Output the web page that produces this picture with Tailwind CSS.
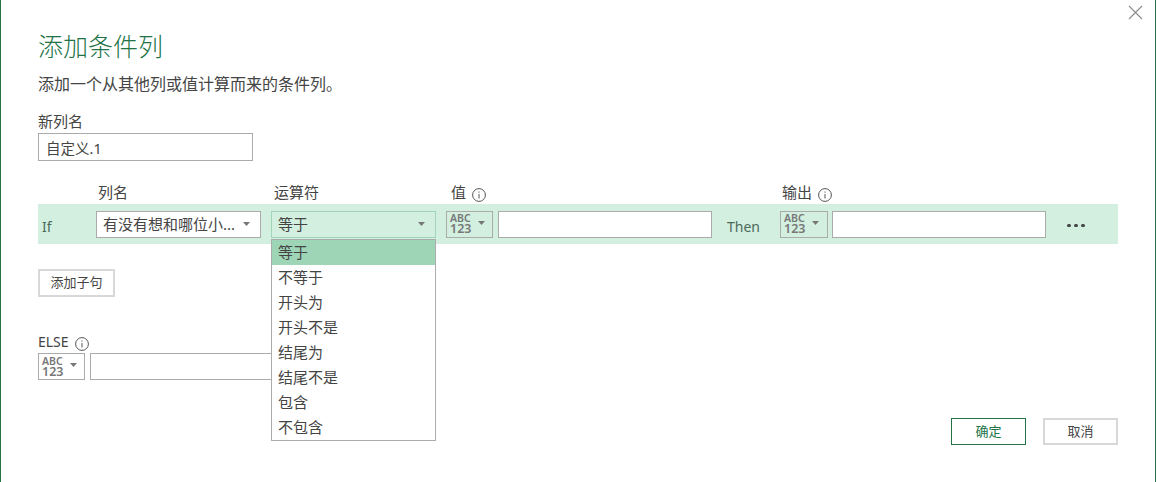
<!DOCTYPE html>
<html lang="zh-CN">
<head>
<meta charset="UTF-8">
<meta name="viewport" content="width=device-width, initial-scale=1.0">
<title>添加条件列</title>
<script src="https://cdn.jsdelivr.net/npm/@tailwindcss/browser@4"></script>
</head>
<body class="bg-white">
<div class="relative h-[482px] w-[1156px] overflow-hidden border-x border-[#217346] bg-white pl-[37px] font-['Noto_Sans','Noto_Sans_CJK_SC',sans-serif] text-[#444444]">
  <!-- close -->
  <button class="absolute right-[12px] top-[5px] h-[15px] w-[15px]">
    <svg viewBox="0 0 15 15" class="h-[15px] w-[15px]" fill="none" stroke="#8a8a8a" stroke-width="1.1"><path d="M1 1L14 14M14 1L1 14"/></svg>
  </button>

  <h1 class="pt-[29px] text-[25px] leading-[34px] font-light text-[#217346]">添加条件列</h1>
  <p class="mt-[9px] text-[16px] leading-[24px]">添加一个从其他列或值计算而来的条件列。</p>

  <label class="mt-[15px] block text-[15px] leading-[20px]">新列名</label>
  <input class="mt-[2px] block h-[28px] w-[215px] border border-[#ababab] pl-[7px] text-[14.5px] leading-[20px] text-[#444444] outline-none" value="自定义.1">

  <!-- headers -->
  <div class="mt-[20px] flex h-[22px] text-[15px] leading-[22px]">
    <span class="ml-[60px] w-[176px]">列名</span>
    <span class="w-[177px]">运算符</span>
    <span class="flex w-[331px] items-center">值
      <svg viewBox="0 0 14 14" class="ml-[6px] mt-[5px] h-[14px] w-[14px]" fill="none" stroke="#555555"><circle cx="7" cy="7" r="6.4"/><path d="M7 6v4.5M7 3.5v1.2"/></svg>
    </span>
    <span class="flex items-center">输出
      <svg viewBox="0 0 14 14" class="ml-[6px] mt-[5px] h-[14px] w-[14px]" fill="none" stroke="#555555"><circle cx="7" cy="7" r="6.4"/><path d="M7 6v4.5M7 3.5v1.2"/></svg>
    </span>
  </div>

  <!-- condition row -->
  <div class="relative mt-[1px] flex h-[40px] w-[1080px] items-center bg-[#d3efe0] text-[15px]">
    <span class="mt-[4px] w-[58px] pl-[4px] text-[14px] text-[#4b6a5a]">If</span>
    <div class="flex h-[27px] w-[165px] items-center justify-between border border-[#ababab] bg-white pl-[6px] pr-[10px]">
      <span>有没有想和哪位小...</span>
      <svg viewBox="0 0 7 4" class="h-[4px] w-[7px]" fill="#777777"><path d="M0 0h7L3.5 4z"/></svg>
    </div>
    <div class="ml-[10px] flex h-[27px] w-[165px] items-center justify-between border border-[#a0d5b8] pl-[6px] pr-[10px]">
      <span>等于</span>
      <svg viewBox="0 0 7 4" class="h-[4px] w-[7px]" fill="#777777"><path d="M0 0h7L3.5 4z"/></svg>
    </div>
    <div class="ml-[10px] flex h-[27px] w-[47px] items-center border border-[#ababab] pl-[3px]">
      <div class="flex w-[23px] flex-col font-semibold text-[#777777]">
        <span class="text-[10.5px] leading-[9px]">ABC</span>
        <span class="text-[12.5px] leading-[11px]">123</span>
      </div>
      <svg viewBox="0 0 7 4" class="ml-[5px] mb-[3px] h-[4px] w-[7px]" fill="#777777"><path d="M0 0h7L3.5 4z"/></svg>
    </div>
    <div class="ml-[5px] h-[27px] w-[214px] border border-[#ababab] bg-white"></div>
    <span class="mt-[4px] w-[68px] pl-[15px] text-[14px] text-[#4b6a5a]">Then</span>
    <div class="flex h-[27px] w-[48px] items-center border border-[#ababab] pl-[3px]">
      <div class="flex w-[23px] flex-col font-semibold text-[#777777]">
        <span class="text-[10.5px] leading-[9px]">ABC</span>
        <span class="text-[12.5px] leading-[11px]">123</span>
      </div>
      <svg viewBox="0 0 7 4" class="ml-[5px] mb-[3px] h-[4px] w-[7px]" fill="#777777"><path d="M0 0h7L3.5 4z"/></svg>
    </div>
    <div class="ml-[4px] h-[27px] w-[214px] border border-[#ababab] bg-white"></div>
    <div class="ml-[21px] mt-[2px] flex gap-[3px]">
      <span class="h-[3px] w-[4px] rounded-full bg-[#444444]"></span>
      <span class="h-[3px] w-[4px] rounded-full bg-[#444444]"></span>
      <span class="h-[3px] w-[4px] rounded-full bg-[#444444]"></span>
    </div>

    <!-- operator dropdown -->
    <ul class="absolute left-[233px] top-[35px] z-10 w-[165px] border border-[#ababab] bg-white text-[15px] leading-[24px]">
      <li class="h-[25px] bg-[#9fd5b7] pl-[6px]">等于</li>
      <li class="h-[25px] pl-[6px]">不等于</li>
      <li class="h-[25px] pl-[6px]">开头为</li>
      <li class="h-[25px] pl-[6px]">开头不是</li>
      <li class="h-[25px] pl-[6px]">结尾为</li>
      <li class="h-[25px] pl-[6px]">结尾不是</li>
      <li class="h-[25px] pl-[6px]">包含</li>
      <li class="h-[25px] pl-[6px]">不包含</li>
    </ul>
  </div>

  <button class="mt-[25px] block h-[28px] w-[77px] border-2 border-[#d8d8d8] text-[13px]">添加子句</button>

  <div class="mt-[34px] flex h-[22px] items-center text-[14px]"><span class="mb-[2px]">ELSE</span>
    <svg viewBox="0 0 14 14" class="ml-[6px] mt-[3px] h-[14px] w-[14px]" fill="none" stroke="#555555"><circle cx="7" cy="7" r="6.4"/><path d="M7 6v4.5M7 3.5v1.2"/></svg>
  </div>
  <div class="flex">
    <div class="flex h-[27px] w-[47px] items-center border border-[#ababab] pl-[3px]">
      <div class="flex w-[23px] flex-col font-semibold text-[#777777]">
        <span class="text-[10.5px] leading-[9px]">ABC</span>
        <span class="text-[12.5px] leading-[11px]">123</span>
      </div>
      <svg viewBox="0 0 7 4" class="ml-[5px] mb-[3px] h-[4px] w-[7px]" fill="#777777"><path d="M0 0h7L3.5 4z"/></svg>
    </div>
    <div class="ml-[5px] h-[27px] w-[214px] border border-[#ababab] bg-white"></div>
  </div>

  <!-- footer -->
  <div class="mt-[38px] flex w-[1080px] justify-end gap-[17px] text-[13px]">
    <button class="h-[27px] w-[75px] border border-[#217346] text-[#217346]">确定</button>
    <button class="h-[27px] w-[75px] border-2 border-[#d8d8d8]">取消</button>
  </div>
</div>
</body>
</html>
